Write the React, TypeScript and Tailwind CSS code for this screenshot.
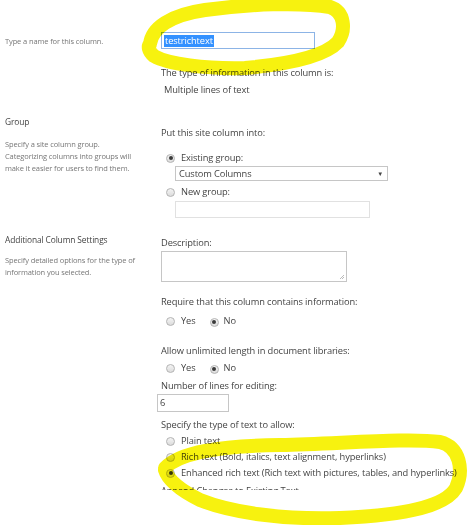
function Radio({ checked = false }: { checked?: boolean }) {
  return (
    <span className="inline-flex h-[9px] w-[9px] shrink-0 items-center justify-center rounded-full border border-[#b3b3b3] bg-[linear-gradient(#f4f4f4,#dcdcdc)]">
      {checked && <span className="h-[4px] w-[4px] rounded-full bg-[#3a3a3a]" />}
    </span>
  )
}

function Option({ label, checked = false }: { label: string; checked?: boolean }) {
  return (
    <div className="flex h-[16px] items-center gap-[6px] pl-[5px]">
      <Radio checked={checked} />
      <span>{label}</span>
    </div>
  )
}

function YesNo({ className = '' }: { className?: string }) {
  return (
    <div className={`flex h-[16px] items-center pl-[5px] ${className}`}>
      <Radio />
      <span className="ml-[6px]">Yes</span>
      <span className="ml-[14px]">
        <Radio checked />
      </span>
      <span className="ml-[5px]">No</span>
    </div>
  )
}

// hand-drawn highlighter marks, multiplied over the form
function Highlights() {
  return (
    <svg className="pointer-events-none absolute left-0 top-0 mix-blend-multiply" width="474" height="525" viewBox="0 0 474 525">
      <g fill="none" stroke="#f7f20f" strokeWidth="14" strokeLinecap="round" strokeLinejoin="round">
        <path d="M150 44 C152 28 170 15 205 10 C250 4 300 2 330 7 C345 12 346 30 338 42 C325 56 290 64 245 68 C205 69 168 64 154 56 C148 51 148 46 150 44" />
        <path d="M165 468 C180 452 220 446 280 445 C350 443 410 438 440 442 C460 447 464 470 456 488 C446 505 410 515 340 518 C280 520 230 512 200 500 C180 490 168 480 165 470" />
      </g>
    </svg>
  )
}

export default function App() {
  return (
    <div className="relative h-[525px] w-[474px] overflow-hidden bg-white font-['Open_Sans',sans-serif] text-[9.3px] leading-[16px] tracking-[-0.12px] text-[#444]">
      {/* name */}
      <div className="flex h-[115px]">
        <div className="w-[156px] shrink-0 pl-[5px] pt-[35px] text-[7.5px] leading-[12px] text-[#777]">Type a name for this column.</div>
        <div className="pt-[32px] pl-[5px]">
          <div className="flex h-[17px] w-[154px] items-center border border-[#8cb4e6] pl-[2px]">
            <span className="bg-[#3391ff] px-[1px] leading-[12px] text-white">testrichtext</span>
          </div>
          <p className="mt-[16px]">The type of information in this column is:</p>
          <p className="mt-[1px] pl-[3px]">Multiple lines of text</p>
        </div>
      </div>

      {/* group */}
      <div className="flex h-[116px]">
        <div className="w-[156px] shrink-0 pl-[5px]">
          <p className="text-[8.4px] leading-[14px]">Group</p>
          <p className="mt-[9px] text-[7.5px] leading-[12px] text-[#777]">
            Specify a site column group.
            <br />
            Categorizing columns into groups will
            <br />
            make it easier for users to find them.
          </p>
        </div>
        <div className="pl-[5px] pt-[10px]">
          <p>Put this site column into:</p>
          <div className="mt-[9px]">
            <Option label="Existing group:" checked />
          </div>
          <div className="ml-[14px] flex h-[15px] w-[213px] items-center justify-between border border-[#c6c6c6] pl-[3px] pr-[4px]">
            <span>Custom Columns</span>
            <span className="text-[6px] leading-none">▼</span>
          </div>
          <div className="mt-[3px]">
            <Option label="New group:" />
          </div>
          <div className="ml-[14px] mt-[1px] h-[17px] w-[195px] border border-[#e1e1e1]" />
        </div>
      </div>

      {/* additional */}
      <div className="flex">
        <div className="w-[156px] shrink-0 pl-[5px]">
          <p className="pt-[2px] text-[8.4px] leading-[14px]">Additional Column Settings</p>
          <p className="mt-[7px] text-[7.5px] leading-[12px] text-[#777]">
            Specify detailed options for the type of
            <br />
            information you selected.
          </p>
        </div>
        <div className="pl-[5px] pt-[4px]">
          <p>Description:</p>
          <div className="relative h-[31px] w-[186px] border border-[#c6c6c6]">
            <svg className="absolute bottom-[1px] right-[1px]" width="6" height="6" viewBox="0 0 6 6">
              <path d="M1 5 L5 1 M3 5 L5 3" stroke="#aaa" strokeWidth="0.8" />
            </svg>
          </div>
          <p className="mt-[12px]">Require that this column contains information:</p>
          <YesNo className="mt-[3px]" />
          <p className="mt-[14px]">Allow unlimited length in document libraries:</p>
          <YesNo className="mt-[1px]" />
          <p className="mt-[2px]">Number of lines for editing:</p>
          <div className="-ml-[4px] flex h-[18px] w-[72px] items-center border border-[#c6c6c6] pl-[2px]">6</div>
          <p className="mt-[5px]">Specify the type of text to allow:</p>
          <Option label="Plain text" />
          <Option label="Rich text (Bold, italics, text alignment, hyperlinks)" />
          <Option label="Enhanced rich text (Rich text with pictures, tables, and hyperlinks)" checked />
          <div className="mt-[6px] h-[3px] overflow-hidden">
            <p className="-mt-[4px]">Append Changes to Existing Text</p>
          </div>
        </div>
      </div>

      <Highlights />
    </div>
  )
}
